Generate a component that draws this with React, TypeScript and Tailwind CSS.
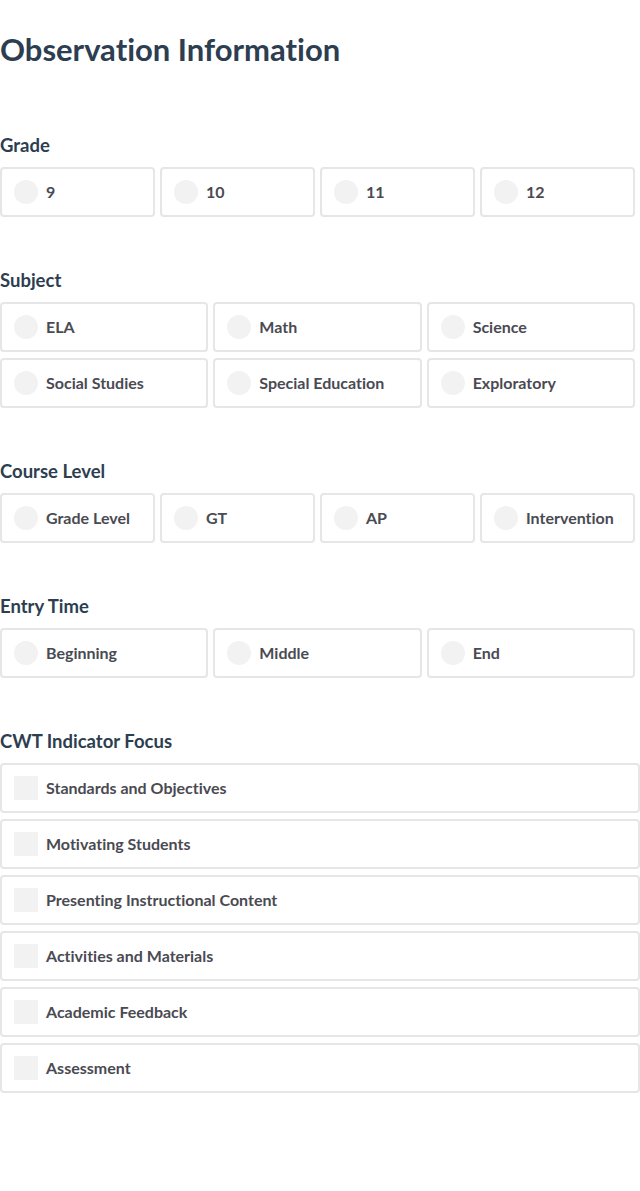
import React from "react";

const font = { fontFamily: "Lato, 'Noto Sans', sans-serif" };

const grades = ["9", "10", "11", "12"];
const subjects = ["ELA", "Math", "Science", "Social Studies", "Special Education", "Exploratory"];
const levels = ["Grade Level", "GT", "AP", "Intervention"];
const entry = ["Beginning", "Middle", "End"];
const indicators = [
  "Standards and Objectives",
  "Motivating Students",
  "Presenting Instructional Content",
  "Activities and Materials",
  "Academic Feedback",
  "Assessment",
];

const RadioBox: React.FC<{ label: string }> = ({ label }) => (
  <div className="mr-[5px] mb-[6px] flex h-[50px] items-center rounded-[4px] border-2 border-[#e6e6e6] bg-white pl-[12px]">
    <span className="h-[24px] w-[24px] shrink-0 rounded-full bg-[#f2f2f2]" />
    <span className="ml-[8px] text-[16px] font-bold text-[#4a4a52]">{label}</span>
  </div>
);

const CheckBox: React.FC<{ label: string }> = ({ label }) => (
  <div className="mb-[6px] flex h-[50px] items-center rounded-[4px] border-2 border-[#e6e6e6] bg-white pl-[12px]">
    <span className="h-[24px] w-[24px] shrink-0 bg-[#f2f2f2]" />
    <span className="ml-[8px] text-[16px] font-bold text-[#4a4a52]">{label}</span>
  </div>
);

const Label: React.FC<{ children: React.ReactNode }> = ({ children }) => (
  <h2 className="mb-[11px] text-[18.5px] font-bold leading-[22px] text-[#2c3e50]">{children}</h2>
);

export default function App() {
  return (
    <div
      className="min-h-[1191px] w-[640px] bg-white [font-variant-ligatures:none]"
      style={font}
    >
      <h1 className="pt-[30px] text-[31px] font-bold leading-[38px] text-[#2c3e50]">
        Observation Information
      </h1>

      <section className="mt-[66px]">
        <Label>Grade</Label>
        <div className="grid grid-cols-4">
          {grades.map((g) => (
            <RadioBox key={g} label={g} />
          ))}
        </div>
      </section>

      <section className="mt-[46px]">
        <Label>Subject</Label>
        <div className="grid grid-cols-3">
          {subjects.map((s) => (
            <RadioBox key={s} label={s} />
          ))}
        </div>
      </section>

      <section className="mt-[46px]">
        <Label>Course Level</Label>
        <div className="grid grid-cols-4">
          {levels.map((l) => (
            <RadioBox key={l} label={l} />
          ))}
        </div>
      </section>

      <section className="mt-[46px]">
        <Label>Entry Time</Label>
        <div className="grid grid-cols-3">
          {entry.map((e) => (
            <RadioBox key={e} label={e} />
          ))}
        </div>
      </section>

      <section className="mt-[46px]">
        <Label>CWT Indicator Focus</Label>
        <div>
          {indicators.map((i) => (
            <CheckBox key={i} label={i} />
          ))}
        </div>
      </section>
    </div>
  );
}
